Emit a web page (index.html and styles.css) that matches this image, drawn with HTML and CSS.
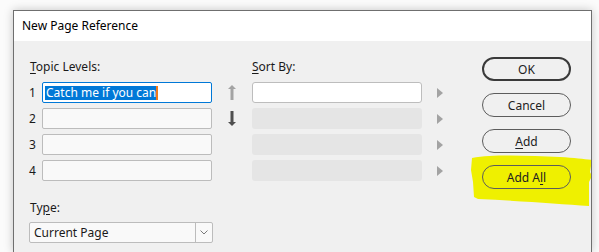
FILE: index.html
```html
<!DOCTYPE html>
<html>
<head>
<meta charset="utf-8">
<link rel="stylesheet" href="styles.css">
</head>
<body>
<div class="window">
  <div class="titlebar">New Page Reference</div>
  <div class="content">
    <svg class="marker" width="599" height="252" viewBox="0 0 599 252">
      <path d="M472,158 C495,154 530,156 560,157 C575,158 585,159 592,160 L590,172 L592,176 L589,182 L589,206 C560,204 520,201 478,199 L474,197 L473,182 L471,170 Z" fill="#eff000"/>
    </svg>
    <div class="left">
      <div class="grid">
        <div class="label span2"><u>T</u>opic Levels:</div>
        <div class="spacer"></div>
        <div class="label sortlabel"><u>S</u>ort By:</div>
        <div></div>

        <div class="num">1</div>
        <div class="field focus"><span class="sel">Catch me if you can</span><span class="caret"></span></div>
        <div class="arrow"><svg width="8" height="15" viewBox="0 0 8 15"><path d="M4,0 L8,4 L5.5,4 L5.5,15 L2.5,15 L2.5,4 L0,4 Z" fill="#a3a3a3"/></svg></div>
        <div class="sort active"></div>
        <div class="tri"></div>

        <div class="num">2</div>
        <div class="field"></div>
        <div class="arrow"><svg width="8" height="15" viewBox="0 0 8 15"><path d="M4,15 L8,11 L5.5,11 L5.5,0 L2.5,0 L2.5,11 L0,11 Z" fill="#4f4f4f"/></svg></div>
        <div class="sort"></div>
        <div class="tri"></div>

        <div class="num">3</div>
        <div class="field"></div>
        <div></div>
        <div class="sort"></div>
        <div class="tri"></div>

        <div class="num">4</div>
        <div class="field"></div>
        <div></div>
        <div class="sort"></div>
        <div class="tri"></div>
      </div>
      <div class="typelabel">Ty<u>p</u>e:</div>
      <div class="select">
        <span class="selval">Current Page</span>
        <span class="dropbtn"><svg width="8" height="5" viewBox="0 0 8 5"><path d="M0.5,0.5 L4,4 L7.5,0.5" fill="none" stroke="#7a7a7a" stroke-width="1"/></svg></span>
      </div>
    </div>
    <div class="buttons">
      <div class="btn default">OK</div>
      <div class="btn">Cancel</div>
      <div class="btn"><u>A</u>dd</div>
      <div class="btn">Add A<u>l</u>l</div>
    </div>
  </div>
</div>
</body>
</html>
```

FILE: styles.css
```css
html, body {
  margin: 0;
  padding: 0;
}
body {
  width: 599px;
  height: 252px;
  overflow: hidden;
  background: #fbfbfb;
  font-family: "Noto Sans", "Open Sans", sans-serif;
  font-size: 12px;
  color: #1a1a1a;
}
.window {
  margin: 10px 0 0 13px;
  width: 577px;
  height: 241px;
  overflow: hidden;
  border: 1px solid #6f6f6f;
  border-bottom: none;
  box-shadow: 0 0 9px rgba(0,0,0,0.22);
  background: #f0f0f0;
}
.titlebar {
  height: 30px;
  background: #ffffff;
  padding-left: 8px;
  line-height: 30px;
  font-size: 12px;
  color: #000;
}
.content {
  position: relative;
  display: flex;
  align-items: flex-start;
  padding-left: 15px;
}
.marker {
  position: absolute;
  left: -14px;
  top: -41px;
  z-index: 0;
}
.left {
  position: relative;
  z-index: 1;
  padding-top: 18px;
}
.grid {
  display: grid;
  grid-template-columns: 13px 170px 10px 20px 10px 170px 8px 20px;
  grid-template-rows: 18px 21px 21px 21px 21px;
  row-gap: 5px;
  align-items: center;
}
.grid > .span2 { grid-column: 1 / 3; }
.grid > .spacer { grid-column: 3 / 6; }
.label {
  align-self: start;
  line-height: 16px;
  padding-left: 1px;
}
.sortlabel { padding-left: 0; }
.num {
  grid-column: 1;
  line-height: 16px;
}
.field {
  grid-column: 2;
  height: 21px;
  box-sizing: border-box;
  border: 1px solid #bcbcbc;
  border-radius: 2px;
  background: #f9f9f9;
  display: flex;
  align-items: center;
  padding-left: 2px;
}
.field.focus {
  border-color: #0078d7;
  background: #ffffff;
}
.sel {
  background: #0078d7;
  color: #ffffff;
  line-height: 14px;
  padding-left: 1px;
}
.caret {
  display: inline-block;
  width: 2px;
  height: 14px;
  background: #f07a1a;
}
.arrow {
  grid-column: 4;
  display: flex;
  justify-content: center;
  align-items: center;
}
.arrow svg { display: block; }
.sort {
  grid-column: 6;
  height: 21px;
  box-sizing: border-box;
  border-radius: 3px;
  background: #e5e5e5;
}
.sort.active {
  background: #ffffff;
  border: 1px solid #bdbdbd;
}
.tri {
  grid-column: 8;
  justify-self: center;
  width: 0;
  height: 0;
  border-top: 5px solid transparent;
  border-bottom: 5px solid transparent;
  border-left: 6px solid #a3a3a3;
}
.typelabel {
  margin-top: 19px;
  line-height: 16px;
  padding-left: 1px;
}
.select {
  margin-top: 6px;
  width: 184px;
  height: 21px;
  box-sizing: border-box;
  border: 1px solid #bcbcbc;
  border-radius: 2px;
  background: #f9f9f9;
  display: flex;
  align-items: center;
}
.selval {
  flex: 1;
  padding-left: 4px;
  line-height: 16px;
}
.dropbtn {
  width: 16px;
  height: 19px;
  border-left: 1px solid #bcbcbc;
  display: flex;
  align-items: center;
  justify-content: center;
}
.dropbtn svg { display: block; }
.buttons {
  position: relative;
  z-index: 1;
  margin-left: 32px;
  padding-top: 16px;
  display: flex;
  flex-direction: column;
  gap: 12px;
}
.btn {
  width: 89px;
  height: 24px;
  box-sizing: border-box;
  border: 1px solid #5c5c5c;
  border-radius: 12px;
  display: flex;
  align-items: center;
  justify-content: center;
  color: #222;
  font-size: 12px;
}
.btn.default {
  border: 2px solid #3a3a3a;
}
u { text-underline-offset: 2px; }
```
